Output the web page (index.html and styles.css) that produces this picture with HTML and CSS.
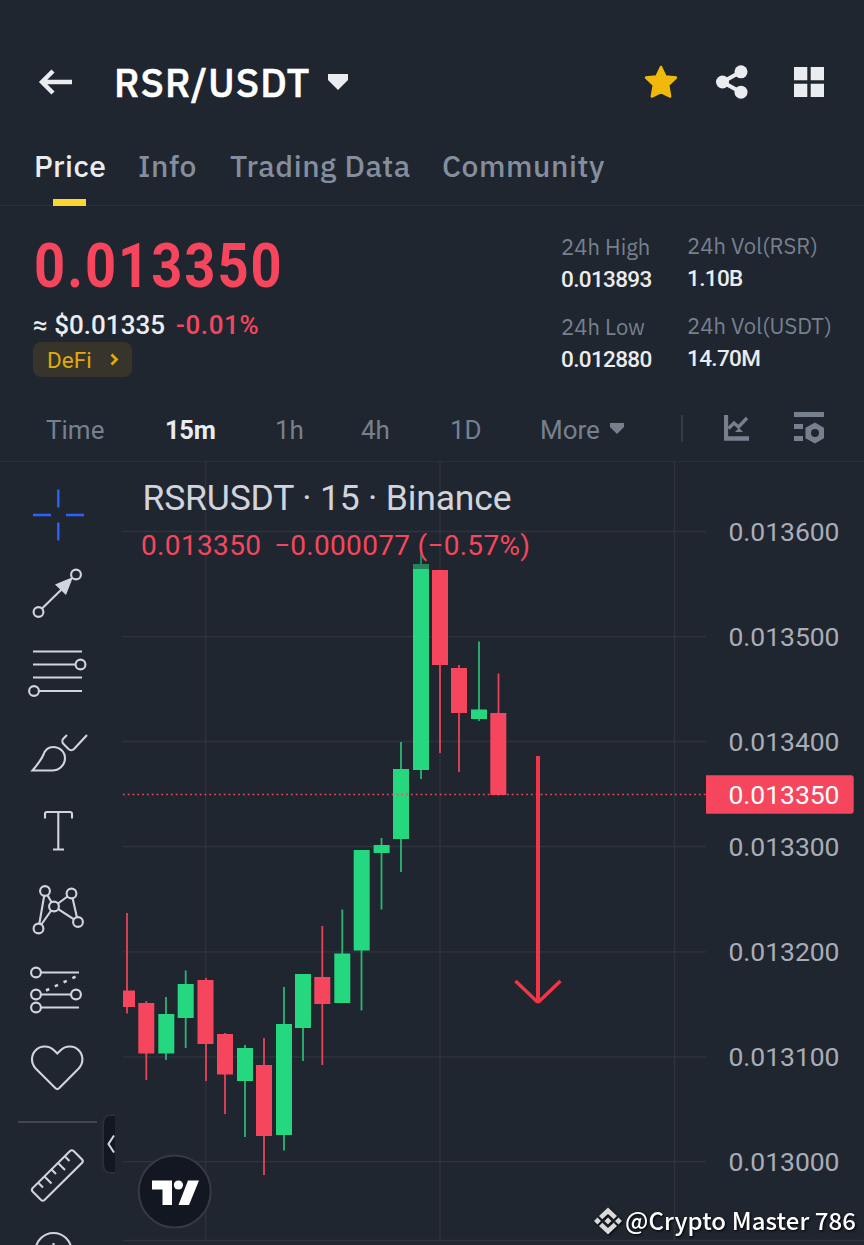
FILE: index.html
```html
<!DOCTYPE html>
<html lang="en">
<head>
    <meta charset="UTF-8">
    <meta name="viewport" content="width=device-width, initial-scale=1.0">
    <title>RSR/USDT</title>
    <link rel="stylesheet" href="styles.css">
</head>
<body>
    <header class="topbar">
        <svg class="back" width="34" height="26" viewBox="0 0 34 26"><path d="M15 2 4 13l11 11M4 13h30" fill="none" stroke="#eaecef" stroke-width="4.4"/></svg>
        <h1 class="pair">RSR/USDT</h1>
        <svg class="caret" width="20" height="16" viewBox="0 0 20 16"><path d="M0 0h20v6L10 16 0 6z" fill="#eaecef"/></svg>
        <div class="actions">
            <svg width="34" height="34" viewBox="0 0 34 34"><path d="M17 2l4.400 9.400 10.600 1.200-7.800 7.400 2 11.500L17 27.200l-9.200 4.300 2-11.500L2 12.600l10.600-1.200z" fill="#f0b90b" stroke="#f0b90b" stroke-width="2.500" stroke-linejoin="round"/></svg>
            <svg width="32" height="34" viewBox="0 0 32 34"><g fill="#eaecef"><circle cx="6.500" cy="17" r="6.500"/><circle cx="25" cy="6.800" r="6.500"/><circle cx="25" cy="27.200" r="6.500"/></g><path d="M25 6.800 6.500 17 25 27.200" fill="none" stroke="#eaecef" stroke-width="4"/></svg>
            <svg width="30" height="30" viewBox="0 0 30 30"><path d="M0 0h13.300v13.300H0zM16.700 0H30v13.300H16.700zM0 16.700h13.300V30H0zM16.700 16.700H30V30H16.700z" fill="#eaecef"/></svg>
        </div>
    </header>

    <nav class="tabs">
        <span class="tab active">Price</span>
        <span class="tab">Info</span>
        <span class="tab">Trading Data</span>
        <span class="tab">Community</span>
    </nav>

    <section class="ticker">
        <div class="quote">
            <div class="last">0.013350</div>
            <div class="fiat"><span>≈ $0.01335</span><span class="down">-0.01%</span></div>
            <div class="tag">DeFi <svg width="9" height="13" viewBox="0 0 9 13"><path d="M1.500 1.500 6.500 6.500l-5 5" fill="none" stroke="#e0aa0c" stroke-width="2.800"/></svg></div>
        </div>
        <div class="stats">
            <div class="stat"><span class="label high">24h High</span><b>0.013893</b></div>
            <div class="stat"><span class="label low">24h Low</span><b>0.012880</b></div>
        </div>
        <div class="stats volume">
            <div class="stat"><span class="label">24h Vol(RSR)</span><b>1.10B</b></div>
            <div class="stat"><span class="label">24h Vol(USDT)</span><b>14.70M</b></div>
        </div>
    </section>

    <div class="intervals">
        <span>Time</span>
        <span class="selected">15m</span>
        <span>1h</span>
        <span>4h</span>
        <span>1D</span>
        <span class="more">More <svg width="14" height="11" viewBox="0 0 14 11"><path d="M0 0h14v4L7 11 0 4z" fill="#76808f"/></svg></span>
        <i class="split"></i>
        <svg width="25" height="26" viewBox="0 0 25 26"><path d="M2 0v23.500h23" fill="none" stroke="#76808f" stroke-width="4.300"/><path d="M4.500 13.500 10 8l4.500 4L23 3" fill="none" stroke="#76808f" stroke-width="3.300"/><path d="M11 17h8l-4-4z" fill="#76808f"/></svg>
        <svg width="31" height="32" viewBox="0 0 31 32"><path d="M0 0h30v5H0zM0 12h9v5H0zM0 24h9v5H0zM21 10.500l9 5.300v10.500l-9 5.300-9.500-5.300V15.800z" fill="#76808f"/><circle cx="21" cy="21" r="4" fill="#202630"/></svg>
    </div>

    <main class="workspace">
        <aside class="tools">
            <svg viewBox="0 0 122 79" class="cross"><path d="M58.300 13.500v18M58.300 46.500v18M33 39h18M66 39h18"/></svg>
            <svg viewBox="0 0 122 79"><path d="M42 53.500 62 34"/><path class="solid" d="M55 29.500l18-7.500-7 18z"/><circle cx="38.500" cy="57" r="4.900"/><circle cx="76" cy="19.500" r="4.900"/></svg>
            <svg viewBox="0 0 122 79"><path d="M33 17.500h49M33 30.500h42M33 43.500h49M39 57h43"/><circle cx="80.500" cy="30.500" r="4.900"/><circle cx="34" cy="57" r="4.900"/></svg>
            <svg viewBox="0 0 122 79"><path d="M32.500 57.500C38 51 41.500 46.500 43.500 41.500 45.500 36 49 34 53 34c7 0 12 5 12 11.500S59 57.500 52 57.500zM67 22l-3.500 3.500c-1.500 1.500-1.500 4 0 5.500l5 5c1.500 1.500 4 1.500 5.500 0L87 22"/></svg>
            <svg viewBox="0 0 122 79"><path d="M45 26.500V22q0-2 2-2h23q2 0 2 2v4.500M58.300 20v37.500M53 57.500h11"/></svg>
            <svg viewBox="0 0 122 79"><path d="M38.500 57.500 45 20l9 15.500zM54 35.500l17.500-13L78 51z"/><circle cx="45" cy="20" r="4.900"/><circle cx="71.500" cy="22.500" r="4.900"/><circle cx="54" cy="35.500" r="4.900"/><circle cx="78" cy="51" r="4.900"/><circle cx="38.500" cy="57.500" r="4.900"/></svg>
            <svg viewBox="0 0 122 79"><path d="M41 22.500h38M41 44.500h30M41 57.500h38"/><path class="dots" d="M46 40.500 76 26.500"/><circle cx="36" cy="22.500" r="4.900"/><circle cx="36" cy="44.500" r="4.900"/><circle cx="76" cy="44.500" r="4.900"/><circle cx="36" cy="57.500" r="4.900"/></svg>
            <svg viewBox="0 0 122 79"><path d="M57.300 24.500 54 21.200C48.500 16.200 40.500 16.500 35.700 21.200 31 26 30.500 34 35.700 39.500L55.500 59.300q1.800 1.500 3.600 0L78.700 39.500c5.200-5.500 4.700-13.500 0-18.300C74 16.500 66 16.200 60.600 21.200z"/></svg>
            <hr>
            <svg viewBox="0 0 122 79"><path d="M70 15q1.800-1.500 3.600 0l8.500 8.500q1.500 1.600 0 3.300L44.500 64q-1.700 1.500-3.400 0L32.600 55.500q-1.500-1.700 0-3.400zM38.500 47l4.500 4.500M44.500 40.500l7 7M51.500 33.500l4.500 4.500M58 27l7 7M65 20.500l4.500 4.500"/></svg>
            <svg viewBox="0 0 122 79"><circle cx="53.500" cy="36" r="18"/><path d="M53.500 28v16M45.500 36h16"/></svg>
            <svg class="collapse" viewBox="0 0 13 60"><path class="shell" d="M13 1h-3Q1 1 1 10v40q0 9 9 9h3"/><path d="M12 21.500 6.500 30l5.500 8.500"/></svg>
        </aside>

        <!-- y axis: 0.000100 = 105px -->
        <svg class="chart" width="742" height="783" viewBox="122 462 742 783">
            <path class="grid" d="M123 531.500h583M123 636.700h583M123 741.500h583M123 846.500h583M123 951.800h583M123 1056.800h583M123 1161.700h583M123 1240.500h741M205.700 462v778M440 462v778M674.500 462v778"/>

            <g class="up">
                <path d="M166 997v63M185.700 970.500v77.500M245 1045v92M284 987v163.500M303 974v87M342.300 909.500v93M361.500 850v160.500M381.500 838v71.500M401 742v130M421 569v210M479 641.500v79.500"/>
                <rect x="158.300" y="1014" width="16" height="39.500"/>
                <rect x="177.700" y="984" width="16" height="34"/>
                <rect x="237" y="1048" width="16" height="33"/>
                <rect x="276" y="1024" width="16" height="111"/>
                <rect x="295" y="974" width="16" height="54"/>
                <rect x="334.300" y="953.500" width="16" height="49.500"/>
                <rect x="353.700" y="850" width="16" height="100.500"/>
                <rect x="373.600" y="845" width="16" height="8"/>
                <rect x="393" y="769" width="16" height="70"/>
                <rect x="413" y="569" width="16" height="201"/>
                <rect x="471" y="709.500" width="16" height="9.500"/>
            </g>
            <path d="M420 553h2v11h7v5h-16v-5h7z" fill="#23855c"/>
            <g class="dn">
                <path d="M127 913v100.500M146.300 1001v79M206 978v103M225 1033v81M264 1038v137M322.300 926v139M440 570v183M459 665v107M498.500 673.500v122"/>
                <rect x="123" y="990.500" width="12" height="16.500"/>
                <rect x="138.300" y="1003" width="16" height="50.500"/>
                <rect x="197.500" y="980" width="16" height="64"/>
                <rect x="217" y="1034" width="16" height="40.500"/>
                <rect x="256" y="1065" width="16" height="71"/>
                <rect x="314.300" y="977" width="16" height="27"/>
                <rect x="432" y="570" width="16" height="95"/>
                <rect x="451" y="668" width="16" height="45"/>
                <rect x="490.300" y="713" width="16" height="82"/>
            </g>

            <path class="price-line" d="M123 794.500h583"/>
            <path class="arrow" d="M538 756v246"/>
            <path class="arrow head" d="M515.500 981 537 1001.500h2L560.500 981"/>

            <text class="symbol" x="142.500" y="509.500" textLength="369">RSRUSDT · 15 · Binance</text>
            <text class="change" x="141" y="555" textLength="120">0.013350</text>
            <text class="change" x="274" y="555" textLength="256">−0.000077 (−0.57%)</text>

            <g class="axis">
                <text x="728.500" y="541" textLength="111">0.013600</text>
                <text x="728.500" y="646" textLength="111">0.013500</text>
                <text x="728.500" y="751" textLength="111">0.013400</text>
                <text x="728.500" y="856" textLength="111">0.013300</text>
                <text x="728.500" y="961" textLength="111">0.013200</text>
                <text x="728.500" y="1066" textLength="111">0.013100</text>
                <text x="728.500" y="1171.400" textLength="111">0.013000</text>
                <path d="M706 775.200h145q2.700 0 2.700 2.700v33.200q0 2.700-2.700 2.700H706z" fill="#f6465d"/>
                <text class="now" x="728.500" y="803.500" textLength="111">0.013350</text>
            </g>

            <circle cx="174.700" cy="1191.500" r="36" fill="#131722" stroke="#363a45" stroke-width="2"/>
            <path d="M152 1180.500h20V1205h-9.500v-15.500H152zM188 1180.500h11L189 1205h-10.500z" fill="#fff"/>
            <circle cx="178.400" cy="1185" r="4.600" fill="#fff"/>

            <g class="watermark">
                <path d="M608 1207.500l9 8.500-3.300 3.300-5.700-5.300-5.700 5.300-3.300-3.300zM608 1234.500l9-8.500-3.300-3.300-5.700 5.300-5.700-5.300-3.300 3.300zM608 1217.500l3.500 3.500-3.500 3.500-3.500-3.500zM597.500 1217.500l3.500 3.500-3.500 3.500-3.500-3.500zM618.500 1217.500l3.500 3.500-3.500 3.500-3.500-3.500z"/>
                <text x="625" y="1230" textLength="231">@Crypto Master 786</text>
            </g>
        </svg>
    </main>
</body>
</html>
```
FILE: styles.css
```css
:root {
    --bg: #202630;
    --line: #2a2f39;
    --text: #eaecef;
    --muted: #848e9c;
    --dim: #76808f;
    --red: #f6465d;
    --green: #25d880;
    --plex: "IBM Plex Sans", "Noto Sans CJK SC", sans-serif;
}

* {
    margin: 0;
    padding: 0;
    box-sizing: border-box;
}

body {
    width: 864px;
    height: 1245px;
    overflow: hidden;
    background: var(--bg);
    color: var(--text);
    font-family: Roboto, sans-serif;
}

svg {
    display: block;
    flex: none;
}

/* Header */
.topbar {
    height: 128px;
    padding: 36px 40px 0 38px;
    display: flex;
    align-items: center;
}

.pair {
    width: 214px;
    margin-left: 42px;
    padding-top: 2px;
    font: 500 39px/50px var(--plex);
    letter-spacing: 1px;
    color: #fff;
    -webkit-text-stroke: 0.6px #fff;
    white-space: nowrap;
}

.actions {
    margin-left: auto;
    display: flex;
    align-items: center;
}

.actions svg + svg {
    margin-left: 38px;
}

.actions svg:last-child {
    margin-left: 46px;
}

.tabs {
    height: 78px;
    padding: 17px 0 0 34px;
    display: grid;
    grid-template-columns: 104px 92px 212px 200px;
    font: 500 30px/42px var(--plex);
    letter-spacing: 0.55px;
    color: var(--muted);
    white-space: nowrap;
    border-bottom: 1px solid var(--line);
}

.tab.active {
    color: var(--text);
}

.tab.active::after {
    content: "";
    display: block;
    width: 33px;
    height: 7px;
    margin: 12px 0 0 19px;
    background: #fcd535;
}

/* Ticker */
.ticker {
    height: 192px;
    padding-left: 33px;
    display: grid;
    grid-template-columns: 528px 126px 1fr;
}

.last {
    margin: 24px 0 0 1px;
    font-size: 62px;
    font-weight: 700;
    line-height: 72px;
    letter-spacing: 2.3px;
    color: var(--red);
    transform: scaleX(0.875);
    transform-origin: 0 0;
}

.fiat {
    height: 40px;
    display: flex;
    font-size: 26px;
    font-weight: 500;
    line-height: 47px;
}

.fiat span:first-child {
    width: 143px;
}

.down {
    color: var(--red);
    letter-spacing: 0.6px;
}

.tag {
    display: flex;
    align-items: center;
    justify-content: space-between;
    width: 99px;
    height: 35px;
    padding: 0 13px 0 14px;
    border-radius: 8px;
    background: #37342b;
    color: #e0aa0c;
    font-size: 22.5px;
}

.stats {
    padding-top: 25px;
}

.volume {
    padding-top: 24px;
}

.stat {
    height: 80px;
    white-space: nowrap;
}

.stat .label {
    display: block;
    font: 400 22px/32px var(--plex);
    color: var(--dim);
}

.stat b {
    display: block;
    font-size: 22.5px;
    font-weight: 500;
    line-height: 33px;
    letter-spacing: -0.65px;
}

/* Time frames */
.intervals {
    height: 64px;
    padding-left: 46px;
    display: grid;
    grid-template-columns: 119px 110px 86px 89px 90px 141px 43px 70px 31px;
    align-items: center;
    font-size: 26px;
    color: var(--dim);
    border-bottom: 1px solid var(--line);
}

.intervals .selected {
    color: var(--text);
    font-weight: 700;
    font-size: 25.5px;
    letter-spacing: -0.3px;
}

.intervals > svg {
    margin-bottom: 3px;
}

.more {
    display: flex;
    align-items: center;
    gap: 10px;
}

.more svg {
    margin-bottom: 3px;
}

.split {
    width: 2px;
    height: 27px;
    margin-bottom: 3px;
    background: #343a45;
}

/* Chart area */
.workspace {
    display: flex;
    height: 783px;
    overflow: hidden;
}

.tools {
    position: relative;
    width: 122px;
    flex: none;
    padding-top: 14px;
}

.tools svg {
    width: 122px;
    height: 79px;
    fill: none;
    stroke: #d1d4dc;
    stroke-width: 2.1;
}

.tools .cross {
    stroke: #2962ff;
    stroke-width: 2.4;
}

.tools circle {
    fill: var(--bg);
}

.tools .solid {
    fill: #d1d4dc;
    stroke: none;
}

.tools .dots {
    stroke-width: 2.6;
    stroke-dasharray: 3.5 6.2;
}

.tools hr {
    width: 79px;
    height: 2px;
    margin: 13px 0 13px 18px;
    border: 0;
    background: #434651;
}

.tools .collapse {
    position: absolute;
    left: 102px;
    top: 652px;
    width: 13px;
    height: 60px;
}

.collapse .shell {
    fill: #131722;
    stroke: #2a2e39;
}

.grid {
    stroke: #2e333d;
    stroke-width: 1.3;
    fill: none;
}

.up {
    fill: var(--green);
    stroke: none;
}

.up path {
    stroke: #2bb673;
    stroke-width: 1.8;
}

.dn {
    fill: var(--red);
    stroke: none;
}

.dn path {
    stroke: #e8435a;
    stroke-width: 1.8;
}

.price-line {
    stroke: var(--red);
    stroke-width: 1.5;
    stroke-dasharray: 1.7 3.1;
}

.arrow {
    fill: none;
    stroke: #f23645;
    stroke-width: 4;
}

.arrow.head {
    stroke-width: 3.4;
}

.symbol {
    font-size: 35.5px;
    fill: #d1d4dc;
}

.change {
    font-size: 28px;
    fill: var(--red);
}

.axis {
    font-size: 26.5px;
    fill: #a9adb8;
}

.axis .now {
    fill: #fff;
}

.watermark {
    fill: #d9d9da;
    filter: drop-shadow(1px 1px 1px #000);
}

.watermark text {
    font: 500 24px "Noto Sans CJK SC", sans-serif;
    fill: #fff;
}
```
